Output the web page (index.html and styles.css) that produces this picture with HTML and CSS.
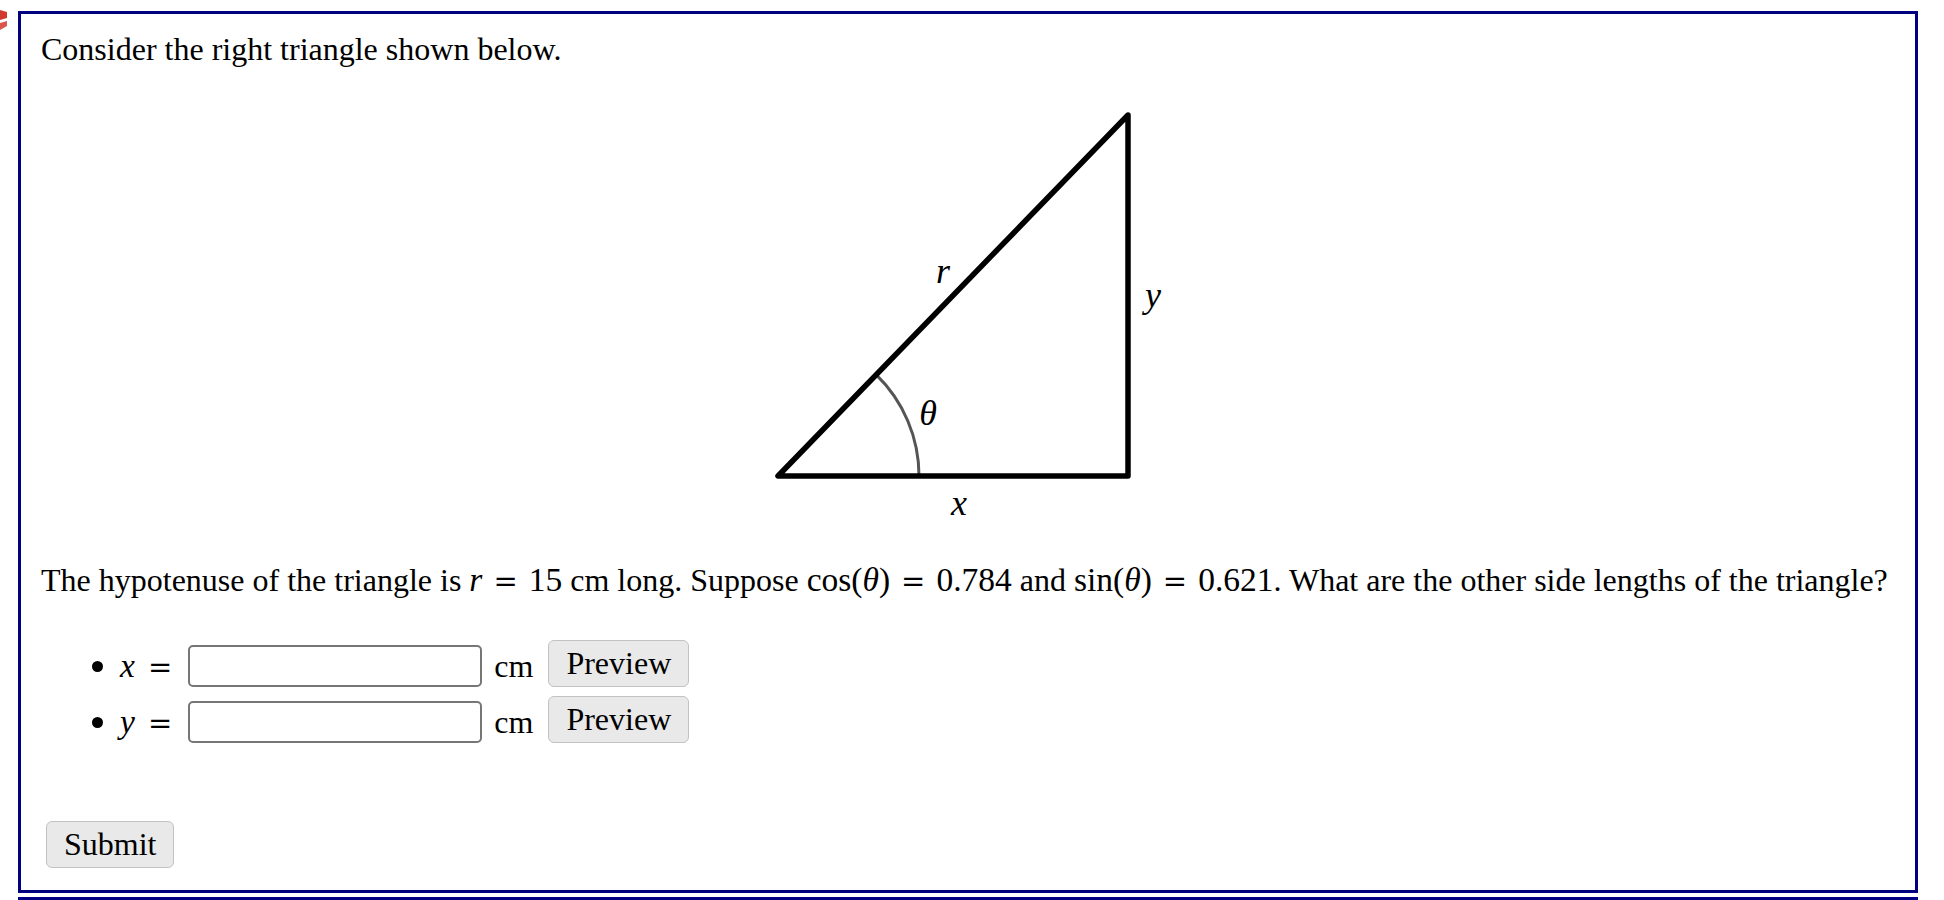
FILE: index.html
```html
<!DOCTYPE html>
<html lang="en">
<head>
    <meta charset="UTF-8">
    <title>Right triangle problem</title>
    <link rel="stylesheet" href="styles.css">
</head>
<body>
    <div class="brand-mark">
        <svg width="8" height="26" viewBox="0 0 8 26">
            <polygon points="0,0 7,2 7,8 0,10" fill="#d23a2e"/>
            <polygon points="0,13 7,11 7,16 0,20" fill="#d23a2e" opacity="0.85"/>
        </svg>
    </div>

    <div class="problem">
        <p class="intro">Consider the right triangle shown below.</p>

        <!-- figure coordinates are page coordinates (viewBox offset) -->
        <svg class="figure" width="460" height="430" viewBox="740 100 460 430">
            <path d="M 919 476 A 141 141 0 0 0 876.1 374.7" fill="none" stroke="#555" stroke-width="3"/>
            <polygon points="778,476 1128,476 1128,115" fill="none" stroke="#000" stroke-width="5.5" stroke-linejoin="round" stroke-linecap="round"/>
            <text class="fig-label" x="943" y="283">r</text>
            <text class="fig-label" x="1153" y="307">y</text>
            <text class="fig-label" x="928" y="425">θ</text>
            <text class="fig-label" x="959" y="515">x</text>
        </svg>

        <p class="statement">The hypotenuse of the triangle is <span class="math"><i>r</i><span class="mo">=</span>15</span> cm long. Suppose <span class="math">cos(<i>θ</i>)<span class="mo">=</span>0.784</span> and <span class="math">sin(<i>θ</i>)<span class="mo">=</span>0.621</span>. What are the other side lengths of the triangle?</p>

        <ul class="answers">
            <li class="answer-row">
                <span class="bullet"></span>
                <span class="math answer-label"><i>x</i><span class="mo">=</span></span>
                <input type="text" class="answer-input" id="answerX">
                <span class="unit">cm</span>
                <button type="button" class="btn">Preview</button>
            </li>
            <li class="answer-row">
                <span class="bullet"></span>
                <span class="math answer-label"><i>y</i><span class="mo">=</span></span>
                <input type="text" class="answer-input" id="answerY">
                <span class="unit">cm</span>
                <button type="button" class="btn">Preview</button>
            </li>
        </ul>

        <div class="submit-row">
            <button type="submit" class="btn btn-submit">Submit</button>
        </div>
    </div>

    <div class="problem problem-next"></div>
</body>
</html>
```

FILE: styles.css
```css
* {
    box-sizing: border-box;
}

body {
    margin: 0;
    font-family: "Liberation Serif", "Times New Roman", serif;
    font-size: 32px;
    line-height: 36px;
    color: #000;
    background: #fff;
}

.brand-mark {
    position: absolute;
    left: 0;
    top: 10px;
    line-height: 0;
}

.problem {
    margin: 11px 0 0 18px;
    width: 1900px;
    border: 3px solid #000080;
    padding: 17px 20px 22px;
}

.problem-next {
    margin-top: 4px;
    height: 40px;
    padding: 0;
}

.intro {
    margin: 0;
}

.figure {
    display: block;
    margin: 33px 0 0 699px;
}

.fig-label {
    font-family: "Liberation Serif", serif;
    font-style: italic;
    font-size: 36px;
    text-anchor: middle;
}

.statement {
    margin: 32px 0 0;
}

.math {
    font-size: 33.5px;
}

.math i {
    font-style: italic;
}

.mo {
    font-family: "DejaVu Serif", serif;
    font-size: 29px;
    margin: 0 11px;
}

.answers {
    list-style: none;
    margin: 0;
    padding: 39px 0 0 51px;
}

.answer-row {
    display: flex;
    align-items: center;
    height: 56px;
}

.bullet {
    width: 11px;
    height: 11px;
    border-radius: 50%;
    background: #000;
    margin-right: 17px;
}

.answer-label i {
    display: inline-block;
    width: 18px;
}

.answer-label .mo {
    margin: 0 10px;
}

.answer-input {
    width: 294px;
    height: 42px;
    margin-left: 6px;
    padding: 0 6px;
    border: 2px solid #767676;
    border-radius: 5px;
    font: inherit;
    font-size: 20px;
}

.unit {
    margin-left: 12px;
}

.btn {
    margin-left: 15px;
    padding: 5px 17px;
    font: inherit;
    line-height: 35px;
    color: #000;
    background: #e9e9e9;
    border: 1px solid #c2c2c2;
    border-radius: 6px;
}

.answer-row .btn {
    margin-bottom: 6px;
}

.submit-row {
    margin-top: 71px;
    padding-left: 5px;
}

.btn-submit {
    margin-left: 0;
}
```
